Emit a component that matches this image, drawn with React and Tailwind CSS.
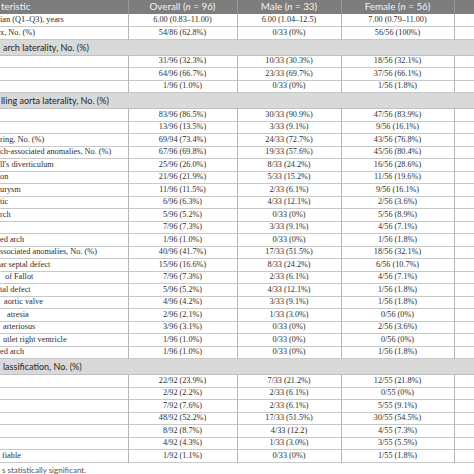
import React from "react";

const header = ["teristic", "Overall (n = 96)", "Male (n = 33)", "Female (n = 56)", ""];

// a row is either a section band (sec) or a data row (label + values)
const rows = [
  { label: "ian (Q1–Q3), years", v: ["6.00 (0.83–11.00)", "6.00 (1.04–12.5)", "7.00 (0.79–11.00)"] },
  { label: "x, No. (%)", v: ["54/86 (62.8%)", "0/33 (0%)", "56/56 (100%)"] },
  { sec: "arch laterality, No. (%)", pad: "pl-[3px]" },
  { label: "", v: ["31/96 (32.3%)", "10/33 (30.3%)", "18/56 (32.1%)"] },
  { label: "", v: ["64/96 (66.7%)", "23/33 (69.7%)", "37/56 (66.1%)"] },
  { label: "", v: ["1/96 (1.0%)", "0/33 (0%)", "1/56 (1.8%)"] },
  { sec: "lling aorta laterality, No. (%)", pad: "pl-[1px]" },
  { label: "", v: ["83/96 (86.5%)", "30/33 (90.9%)", "47/56 (83.9%)"] },
  { label: "", v: ["13/96 (13.5%)", "3/33 (9.1%)", "9/56 (16.1%)"] },
  { label: "ring, No. (%)", v: ["69/94 (73.4%)", "24/33 (72.7%)", "43/56 (76.8%)"] },
  { label: "ch-associated anomalies, No. (%)", v: ["67/96 (69.8%)", "19/33 (57.6%)", "45/56 (80.4%)"] },
  { label: "ll's diverticulum", v: ["25/96 (26.0%)", "8/33 (24.2%)", "16/56 (28.6%)"] },
  { label: "on", v: ["21/96 (21.9%)", "5/33 (15.2%)", "11/56 (19.6%)"] },
  { label: "urysm", v: ["11/96 (11.5%)", "2/33 (6.1%)", "9/56 (16.1%)"] },
  { label: "tic", v: ["6/96 (6.3%)", "4/33 (12.1%)", "2/56 (3.6%)"] },
  { label: "rch", v: ["5/96 (5.2%)", "0/33 (0%)", "5/56 (8.9%)"] },
  { label: "", v: ["7/96 (7.3%)", "3/33 (9.1%)", "4/56 (7.1%)"] },
  { label: "ed arch", v: ["1/96 (1.0%)", "0/33 (0%)", "1/56 (1.8%)"] },
  { label: "ssociated anomalies, No. (%)", v: ["40/96 (41.7%)", "17/33 (51.5%)", "18/56 (32.1%)"] },
  { label: "ar septal defect", v: ["15/96 (16.6%)", "8/33 (24.2%)", "6/56 (10.7%)"] },
  { label: "of Fallot", pad: "pl-[5px]", v: ["7/96 (7.3%)", "2/33 (6.1%)", "4/56 (7.1%)"] },
  { label: "tal defect", v: ["5/96 (5.2%)", "4/33 (12.1%)", "1/56 (1.8%)"] },
  { label: "aortic valve", pad: "pl-[4px]", v: ["4/96 (4.2%)", "3/33 (9.1%)", "1/56 (1.8%)"] },
  { label: "atresia", pad: "pl-[7px]", v: ["2/96 (2.1%)", "1/33 (3.0%)", "0/56 (0%)"] },
  { label: "arteriosus", pad: "pl-[3px]", v: ["3/96 (3.1%)", "0/33 (0%)", "2/56 (3.6%)"] },
  { label: "utlet right ventricle", pad: "pl-[3px]", v: ["1/96 (1.0%)", "0/33 (0%)", "0/56 (0%)"] },
  { label: "ed arch", v: ["1/96 (1.0%)", "0/33 (0%)", "1/56 (1.8%)"] },
  { sec: "lassification, No. (%)", pad: "pl-[3px]" },
  { label: "", v: ["22/92 (23.9%)", "7/33 (21.2%)", "12/55 (21.8%)"] },
  { label: "", v: ["2/92 (2.2%)", "2/33 (6.1%)", "0/55 (0%)"] },
  { label: "", v: ["7/92 (7.6%)", "2/33 (6.1%)", "5/55 (9.1%)"] },
  { label: "", v: ["48/92 (52.2%)", "17/33 (51.5%)", "30/55 (54.5%)"] },
  { label: "", v: ["8/92 (8.7%)", "4/33 (12.2)", "4/55 (7.3%)"] },
  { label: "", v: ["4/92 (4.3%)", "1/33 (3.0%)", "3/55 (5.5%)"] },
  { label: "fiable", pad: "pl-[2px]", v: ["1/92 (1.1%)", "0/33 (0%)", "1/55 (1.8%)"] },
];

const widths = ["w-[128px]", "w-[109px]", "w-[104px]", "w-[113px]", "w-[20px]"];

const serif = { fontFamily: "'Liberation Serif', serif" };
const sans = { fontFamily: "Lato, 'Noto Sans', sans-serif" };

function Head({ text }) {
  const m = text.match(/^(.*)\(n = (\d+)\)$/);
  if (!m) return text;
  return (
    <>
      {m[1]}(<i>n</i> = {m[2]})
    </>
  );
}

export default function App() {
  return (
    <div className="w-[474px] h-[474px] overflow-hidden bg-white text-[#2e2e2e]">
      <table className="table-fixed border-collapse w-[474px]">
        <colgroup>
          {widths.map((w, i) => (
            <col key={i} className={w} />
          ))}
        </colgroup>
        <thead>
          <tr className="h-[14px] bg-[#7d7d7d]">
            {header.map((h, i) => (
              <th
                key={i}
                className={`p-0 font-normal text-[9.8px] leading-none text-[#f4f4f4] whitespace-nowrap overflow-hidden border-l border-[#9a9a9a] first:border-l-0 ${
                  i === 0 ? "text-left pl-[1px]" : "text-center"
                }`}
                style={sans}
              >
                <Head text={h} />
              </th>
            ))}
          </tr>
        </thead>
        <tbody>
          {rows.map((r, i) =>
            r.sec ? (
              <tr key={i} className="h-[16px] bg-[#d9d9d9] border-b border-[#c0c0c0]">
                <td
                  colSpan={5}
                  className={`p-0 text-[9px] leading-none whitespace-nowrap text-[#262626] ${r.pad}`}
                  style={sans}
                >
                  {r.sec}
                </td>
              </tr>
            ) : (
              <tr key={i} className="h-[12.5px] border-b border-[#c8c8c8]">
                <td
                  className={`p-0 text-left text-[8.3px] leading-none whitespace-nowrap overflow-hidden ${r.pad || ""}`}
                  style={serif}
                >
                  {r.label}
                </td>
                {r.v.map((x, j) => (
                  <td
                    key={j}
                    className="p-0 text-center text-[8.2px] leading-none whitespace-nowrap border-l border-[#b5b5b5]"
                    style={serif}
                  >
                    {x}
                  </td>
                ))}
                <td className="p-0 border-l border-[#b5b5b5]" />
              </tr>
            )
          )}
        </tbody>
      </table>
      <div className="pl-[2px] pt-[3px] text-[8px] leading-none text-[#555]" style={sans}>
        s statistically significant.
      </div>
    </div>
  );
}
